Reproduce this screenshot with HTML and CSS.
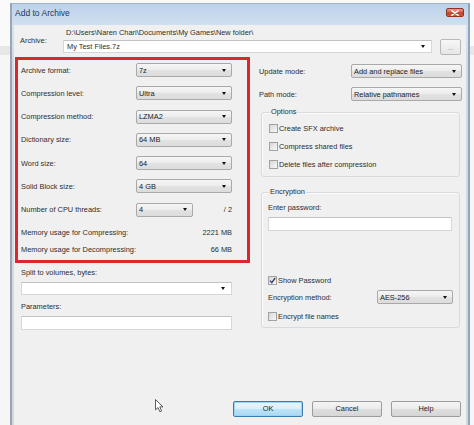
FILE: index.html
```html
<!DOCTYPE html>
<html>
<head>
<meta charset="utf-8">
<link rel="stylesheet" href="styles.css">
</head>
<body>
<div class="window">
  <div class="titlebar">
    <span class="title">Add to Archive</span>
    <span class="close"><svg width="8" height="6" viewBox="0 0 8 6"><path d="M1 0.8 L7 5.2 M7 0.8 L1 5.2" stroke="#fff" stroke-width="1.6" stroke-linecap="round"/></svg></span>
  </div>
  <div class="client">
    <div class="archive">
      <div class="archive-lbl">Archive:</div>
      <div class="archive-main">
        <div class="path">D:\Users\Naren Chari\Documents\My Games\New folder\</div>
        <div class="name-row">
          <div class="ed name"><span>My Test Files.7z</span><i class="arr"></i></div>
          <div class="btn dots">...</div>
        </div>
      </div>
    </div>
    <div class="main">
      <div class="left">
        <div class="redbox">
          <div class="opts">
            <span>Archive format:</span><div class="dd"><span>7z</span><i class="arr"></i></div>
            <span>Compression level:</span><div class="dd"><span>Ultra</span><i class="arr"></i></div>
            <span>Compression method:</span><div class="dd"><span>LZMA2</span><i class="arr"></i></div>
            <span>Dictionary size:</span><div class="dd"><span>64 MB</span><i class="arr"></i></div>
            <span>Word size:</span><div class="dd"><span>64</span><i class="arr"></i></div>
            <span>Solid Block size:</span><div class="dd"><span>4 GB</span><i class="arr"></i></div>
            <span>Number of CPU threads:</span>
            <div class="cpu"><div class="dd short"><span>4</span><i class="arr"></i></div><span>/ 2</span></div>
          </div>
          <div class="mem">
            <div class="mem-row"><span>Memory usage for Compressing:</span><span>2221 MB</span></div>
            <div class="mem-row second"><span>Memory usage for Decompressing:</span><span>66 MB</span></div>
          </div>
        </div>
        <div class="split-lbl">Split to volumes, bytes:</div>
        <div class="ed split"><span></span><i class="arr"></i></div>
        <div class="param-lbl">Parameters:</div>
        <div class="ed param"></div>
      </div>
      <div class="right">
        <div class="mode-row first"><span>Update mode:</span><div class="dd mode"><span>Add and replace files</span><i class="arr"></i></div></div>
        <div class="mode-row"><span>Path mode:</span><div class="dd mode"><span>Relative pathnames</span><i class="arr"></i></div></div>
        <div class="group options">
          <div class="legend">Options</div>
          <div class="cb-row r1"><span class="cb"></span><span>Create SFX archive</span></div>
          <div class="cb-row"><span class="cb"></span><span>Compress shared files</span></div>
          <div class="cb-row"><span class="cb"></span><span>Delete files after compression</span></div>
        </div>
        <div class="group enc">
          <div class="legend">Encryption</div>
          <div class="pw-lbl">Enter password:</div>
          <div class="ed pw"></div>
          <div class="cb-row show"><span class="cb checked"><svg width="7" height="7" viewBox="0 0 7 7"><path d="M1 3.6 L2.8 5.6 L6.2 1" fill="none" stroke="#2c3f66" stroke-width="1.3"/></svg></span><span>Show Password</span></div>
          <div class="method-row"><span>Encryption method:</span><div class="dd method"><span>AES-256</span><i class="arr"></i></div></div>
          <div class="cb-row names"><span class="cb"></span><span>Encrypt file names</span></div>
        </div>
      </div>
    </div>
    <div class="footer">
      <svg class="cursor" width="10" height="14" viewBox="0 0 10 14"><path d="M0.5 0.5 L0.5 10.8 L3 8.6 L4.9 12.8 L6.6 12 L4.8 7.9 L8 7.9 Z" fill="#fff" stroke="#4a4a4a" stroke-width="0.9" stroke-linejoin="round"/></svg>
      <div class="buttons">
        <div class="btn push ok">OK</div>
        <div class="btn push">Cancel</div>
        <div class="btn push">Help</div>
      </div>
    </div>
  </div>
</div>
</body>
</html>
```
FILE: styles.css
```css
body {
  margin: 0;
  width: 474px;
  height: 425px;
  overflow: hidden;
  font-family: "Liberation Sans", Arial, sans-serif;
  font-size: 7.4px;
  color: #2d2d2d;
  background: linear-gradient(to bottom, #fafafa 0, #fafafa 46px, #e7e7e7 46px, #e7e7e7 55px, #f6f6f6 55px);
}

.window {
  margin: 3px 0 0 10px;
  width: 460px;
  height: 440px;
  box-sizing: border-box;
  border-top: 1px solid #9fb3c9;
  border-left: 2px solid #9aa6b3;
  border-right: 2px solid #8ea5be;
  padding: 0 2px;
  background: linear-gradient(to bottom, #bcd1ea 0, #d4e2f1 24px, #d2dbe5 60px, #d2d8de 100%);
  display: flex;
  flex-direction: column;
}

.titlebar {
  height: 21px;
  display: flex;
  align-items: flex-start;
  justify-content: space-between;
  padding: 0 2px 0 1px;
}

.title {
  margin-top: 4px;
  line-height: 11px;
  font-size: 8.5px;
  color: #1d3658;
}

.close {
  margin-top: 4px;
  width: 18px;
  height: 9px;
  box-sizing: border-box;
  border: 1px solid #8a3526;
  border-radius: 2px;
  background: linear-gradient(to bottom, #e3a08f 0, #d1604a 45%, #c0402b 55%, #cf5c43 100%);
  display: flex;
  align-items: center;
  justify-content: center;
}

.close svg { display: block; }

.client {
  flex: 1;
  background: #f0f0f0;
}

/* archive row */
.archive {
  display: flex;
  padding: 3px 0 0 6px;
}

.archive-lbl {
  width: 43px;
  padding-top: 8px;
  line-height: 10px;
}

.archive-main {
  display: flex;
  flex-direction: column;
}

.path {
  line-height: 10px;
  padding-left: 3px;
  margin-bottom: 2px;
}

.name-row {
  display: flex;
  align-items: flex-start;
  gap: 8px;
}

/* editable combos / text boxes */
.ed {
  box-sizing: border-box;
  background: #fff;
  border: 1px solid #d4d8dc;
  border-top-color: #bfc3c8;
  border-radius: 1px;
  display: flex;
  align-items: center;
  padding: 0 6px 0 3px;
}

.name { width: 369px; height: 13px; }

.arr {
  margin-left: auto;
  width: 0;
  height: 0;
  border-left: 2.5px solid transparent;
  border-right: 2.5px solid transparent;
  border-top: 3px solid #111;
}

/* buttons */
.btn {
  box-sizing: border-box;
  border: 1px solid #a3a3a3;
  border-radius: 2px;
  background: linear-gradient(to bottom, #f5f5f5 0, #ebebeb 50%, #dedede 51%, #d6d6d6 100%);
  display: flex;
  align-items: center;
  justify-content: center;
}

.dots {
  width: 21px;
  height: 16px;
  margin-top: -1px;
  color: #a0a0a0;
  border-color: #b8b8b8;
  background: linear-gradient(to bottom, #f7f7f7, #e6e6e6);
}

/* main */
.main {
  display: flex;
  margin-top: 2px;
}

.left {
  width: 236px;
  margin-left: 1px;
}

.redbox {
  box-sizing: border-box;
  width: 235px;
  border: 3px solid #d9272e;
  padding: 3px 15px 4px 3px;
}

.opts {
  display: grid;
  grid-template-columns: 115px 96px;
  grid-auto-rows: 14px;
  row-gap: 9.3px;
  align-items: center;
}

.dd {
  box-sizing: border-box;
  height: 14px;
  border: 1px solid #a9a9a9;
  border-radius: 2px;
  background: linear-gradient(to bottom, #f6f6f6 0, #ececec 50%, #e2e2e2 51%, #dcdcdc 100%);
  display: flex;
  align-items: center;
  padding: 0 5px 0 2px;
  color: #222;
}

.cpu {
  display: flex;
  align-items: center;
  justify-content: space-between;
}

.short { width: 57px; }

.mem { margin-top: 10px; }

.mem-row {
  display: flex;
  justify-content: space-between;
  line-height: 12px;
}

.mem-row.second { margin-top: 5px; }

.split-lbl {
  margin: 5px 0 0 6px;
  line-height: 10px;
}

.split {
  margin: 4px 0 0 6px;
  width: 211px;
  height: 13px;
}

.param-lbl {
  margin: 7px 0 0 6px;
  line-height: 10px;
}

.param {
  margin: 4px 0 0 6px;
  width: 211px;
  height: 14px;
}

/* right column */
.right {
  margin-left: 7px;
  width: 205px;
}

.mode-row {
  display: flex;
  align-items: center;
  justify-content: space-between;
  height: 14px;
  margin-top: 9px;
  padding: 0 1px 0 1px;
}

.mode-row.first { margin-top: 7px; }

.mode { width: 111px; }

.group {
  box-sizing: border-box;
  width: 199px;
  margin-left: 3px;
  border: 1px solid #d6dadf;
  border-radius: 3px;
  box-shadow: inset 1px 1px 0 #fbfbfb;
}

.legend {
  width: fit-content;
  margin: -6px 0 0 1px;
  padding: 0 1px;
  line-height: 10px;
  background: #f0f0f0;
}

.options {
  margin-top: 11px;
  padding: 0 0 6px 7px;
}

.cb-row {
  display: flex;
  align-items: center;
  gap: 1px;
  height: 10px;
  margin-top: 8px;
}

.options .r1 { margin-top: 6.5px; }

.cb {
  box-sizing: border-box;
  width: 9px;
  height: 9px;
  border: 1px solid #a2a2a2;
  background: linear-gradient(135deg, #d8d8d8, #f7f7f7);
  display: flex;
  align-items: center;
  justify-content: center;
}

.cb svg { display: block; }

.enc {
  margin-top: 15.5px;
  padding: 0 6px 5.5px 6px;
}

.pw-lbl {
  margin-top: 5.5px;
  line-height: 10px;
}

.pw {
  margin-top: 4.5px;
  width: 184px;
  height: 14px;
}

.enc .show { margin-top: 44px; }

.method-row {
  display: flex;
  align-items: center;
  justify-content: space-between;
  height: 14px;
  margin-top: 5px;
}

.method { width: 76px; }

.enc .names { margin-top: 7px; }

/* footer */
.footer {
  display: flex;
  align-items: flex-start;
  margin-top: 71px;
  padding: 0 5px 0 141px;
}

.cursor {
  display: block;
  margin-top: -2px;
}

.buttons {
  margin-left: auto;
  display: flex;
  gap: 9px;
}

.push {
  width: 70px;
  height: 16px;
  border-color: #9c9c9c;
  color: #222;
}

.ok {
  border-color: #3d7bad;
  background: linear-gradient(to bottom, #e9f5fc 0, #d9effc 50%, #bee4f8 51%, #a9d9f2 100%);
  box-shadow: inset 0 0 0 1px #9ed3f2;
}
```
